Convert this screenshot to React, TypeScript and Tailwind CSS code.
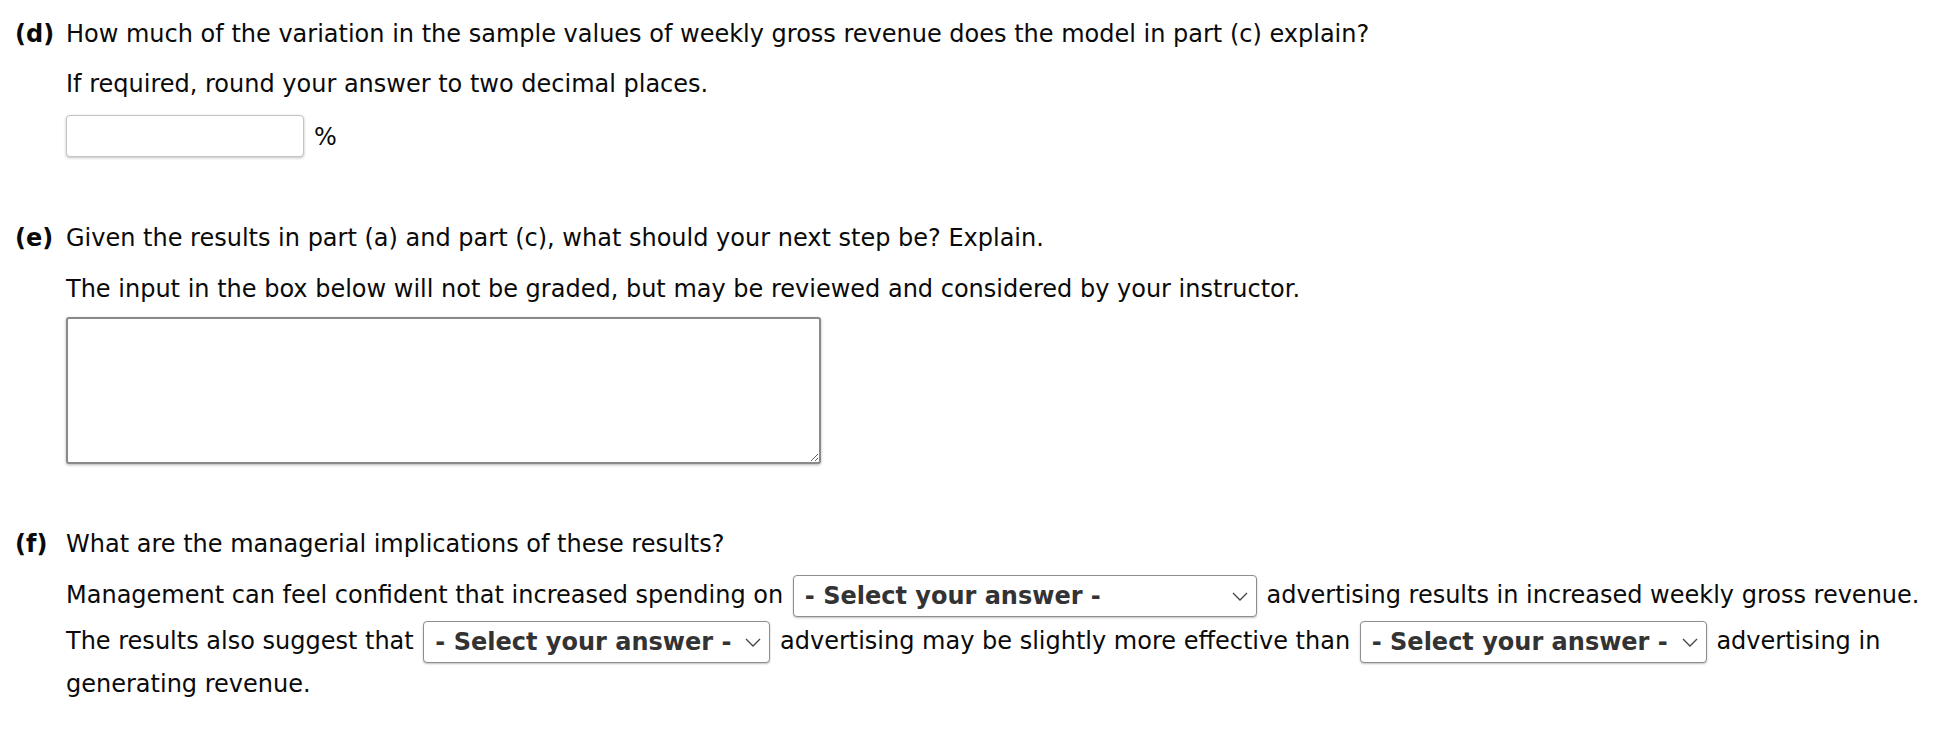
import React from "react";

const Chevron = () => (
  <svg width="16" height="9" viewBox="0 0 16 9" className="shrink-0">
    <path d="M1 1 L8 8 L15 1" fill="none" stroke="#444" strokeWidth="1.3" />
  </svg>
);

const Select = ({ w }: { w: string }) => (
  <span
    className={`inline-flex ${w} h-[42px] items-center justify-between rounded-[4px] border border-[#8e8e8e] bg-white pl-[11px] pr-[8px] align-middle font-bold leading-[24px] text-[#333] shadow-[0_1px_2px_rgba(0,0,0,0.25)] mx-[2px]`}
  >
    <span>- Select your answer -</span>
    <Chevron />
  </span>
);

export default function App() {
  return (
    <div
      className="min-h-[730px] bg-white pl-[15px] pr-[12px] pt-[20px] text-[24px] leading-[28px] text-[#0a0a0a]"
      style={{ fontFamily: '"DejaVu Sans", Verdana, sans-serif' }}
    >
      {/* (d) */}
      <section>
        <div className="flex">
          <span className="w-[51px] shrink-0 font-bold">(d)</span>
          <span className="whitespace-nowrap">
            How much of the variation in the sample values of weekly gross revenue does the model in part (c) explain?
          </span>
        </div>
        <div className="pl-[51px]">
          <p className="mt-[22px]">If required, round your answer to two decimal places.</p>
          <div className="mt-[17px] flex items-center">
            <input
              type="text"
              className="h-[42px] w-[238px] rounded-[4px] border border-[#c4c4c4] bg-white shadow-[0_1px_3px_rgba(0,0,0,0.25)] outline-none"
            />
            <span className="ml-[10px] mt-[2px]">%</span>
          </div>
        </div>
      </section>

      {/* (e) */}
      <section className="mt-[67px]">
        <div className="flex">
          <span className="w-[51px] shrink-0 font-bold">(e)</span>
          <span>Given the results in part (a) and part (c), what should your next step be? Explain.</span>
        </div>
        <div className="pl-[51px]">
          <p className="mt-[23px] whitespace-nowrap">
            The input in the box below will not be graded, but may be reviewed and considered by your instructor.
          </p>
          <textarea className="mt-[14px] block h-[147px] w-[755px] rounded-[3px] border-2 border-[#8a8a8a] bg-white shadow-[0_1px_3px_rgba(0,0,0,0.3)] outline-none" />
        </div>
      </section>

      {/* (f) */}
      <section className="mt-[66px]">
        <div className="flex">
          <span className="w-[51px] shrink-0 font-bold">(f)</span>
          <span>What are the managerial implications of these results?</span>
        </div>
        <div className="mt-[14px] pl-[51px]">
          <div className="whitespace-nowrap leading-[46px]">
            Management can feel confident that increased spending on <Select w="w-[464px]" /> advertising results in
            increased weekly gross revenue.
          </div>
          <div className="whitespace-nowrap leading-[46px]">
            The results also suggest that <Select w="w-[347px]" /> advertising may be slightly more effective than{" "}
            <Select w="w-[347px]" /> advertising in
          </div>
          <div className="leading-[40px]">generating revenue.</div>
        </div>
      </section>
    </div>
  );
}
